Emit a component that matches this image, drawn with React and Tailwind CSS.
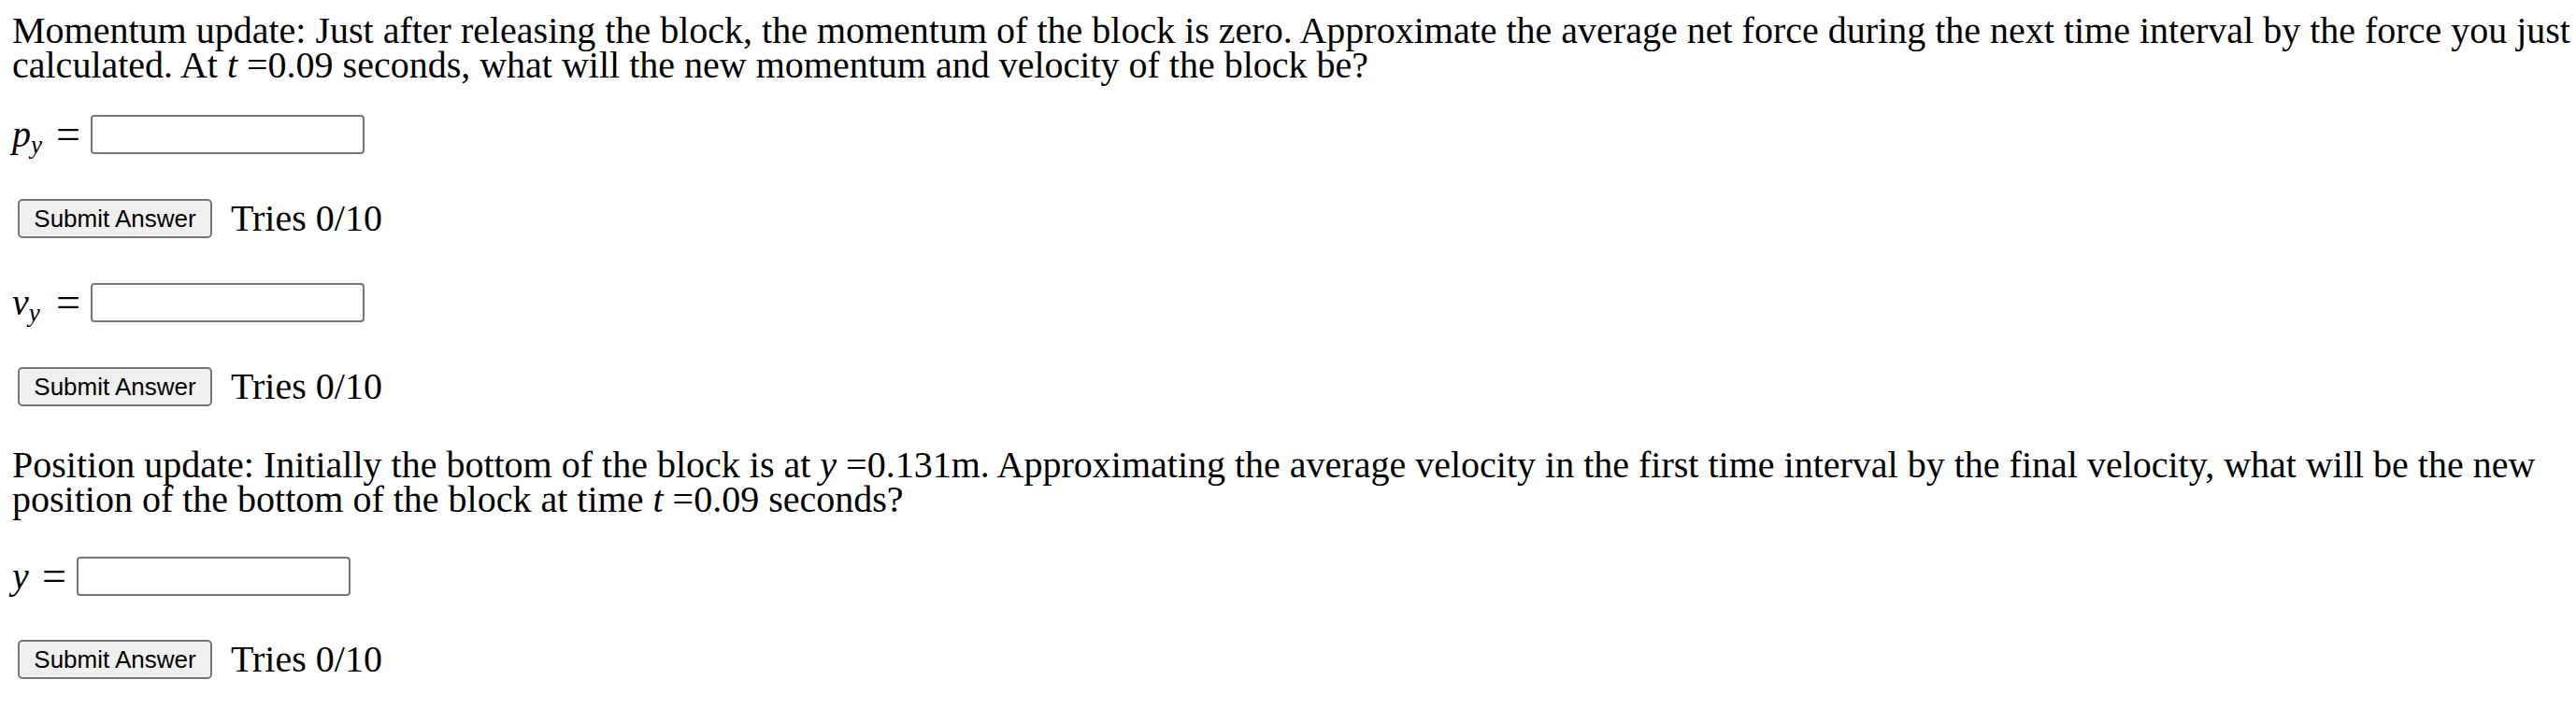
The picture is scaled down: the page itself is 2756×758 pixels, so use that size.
export default function App() {
  const serif = "font-['Liberation_Serif','Times_New_Roman',serif]";

  function SubmitRow() {
    return (
      <div className="flex items-center h-[42px] pl-[6px]">
        <button
          type="button"
          className="h-[42px] w-[208px] rounded-[5px] border-2 border-[#767676] bg-[#efefef] font-['Liberation_Sans',Arial,sans-serif] text-[26px] text-black leading-none"
        >
          Submit Answer
        </button>
        <span className="ml-[20px] text-[40px] leading-[42px]">Tries 0/10</span>
      </div>
    );
  }

  function AnswerInput() {
    return <input type="text" className="h-[42px] w-[293px] rounded-[4px] border-2 border-[#767676] bg-white px-2 text-[26px]" />;
  }

  return (
    <div className={`${serif} bg-white text-black min-h-screen pl-[13px] pt-[14px]`}>
      {/* Momentum update */}
      <p className="text-[40px] leading-[37px] whitespace-nowrap">
        Momentum update: Just after releasing the block, the momentum of the block is zero. Approximate the average net force during the next time interval by the force you just
        <br />
        calculated. At <i>t</i> =0.09 seconds, what will the new momentum and velocity of the block be?
      </p>

      <div className="mt-[35px] flex items-center h-[42px]">
        <span className="w-[47px] text-[40px] leading-[42px]">
          <i>p</i>
          <sub className="text-[27px] italic">y</sub>
        </span>
        <span className="w-[25px] text-[46px] leading-[42px] text-center">=</span>
        <span className="w-[12px]" />
        <AnswerInput />
      </div>

      <div className="mt-[48px]">
        <SubmitRow />
      </div>

      <div className="mt-[48px] flex items-center h-[42px]">
        <span className="w-[47px] text-[40px] leading-[42px]">
          <i>v</i>
          <sub className="text-[27px] italic">y</sub>
        </span>
        <span className="w-[25px] text-[46px] leading-[42px] text-center">=</span>
        <span className="w-[12px]" />
        <AnswerInput />
      </div>

      <div className="mt-[48px]">
        <SubmitRow />
      </div>

      {/* Position update */}
      <p className="mt-[44px] text-[40px] leading-[37px] whitespace-nowrap">
        Position update: Initially the bottom of the block is at <i>y</i> =0.131m. Approximating the average velocity in the first time interval by the final velocity, what will be the new
        <br />
        position of the bottom of the block at time <i>t</i> =0.09 seconds?
      </p>

      <div className="mt-[43px] flex items-center h-[42px]">
        <span className="w-[32px] text-[40px] leading-[42px]">
          <i>y</i>
        </span>
        <span className="w-[25px] text-[46px] leading-[42px] text-center">=</span>
        <span className="w-[12px]" />
        <AnswerInput />
      </div>

      <div className="mt-[47px]">
        <SubmitRow />
      </div>
    </div>
  );
}
